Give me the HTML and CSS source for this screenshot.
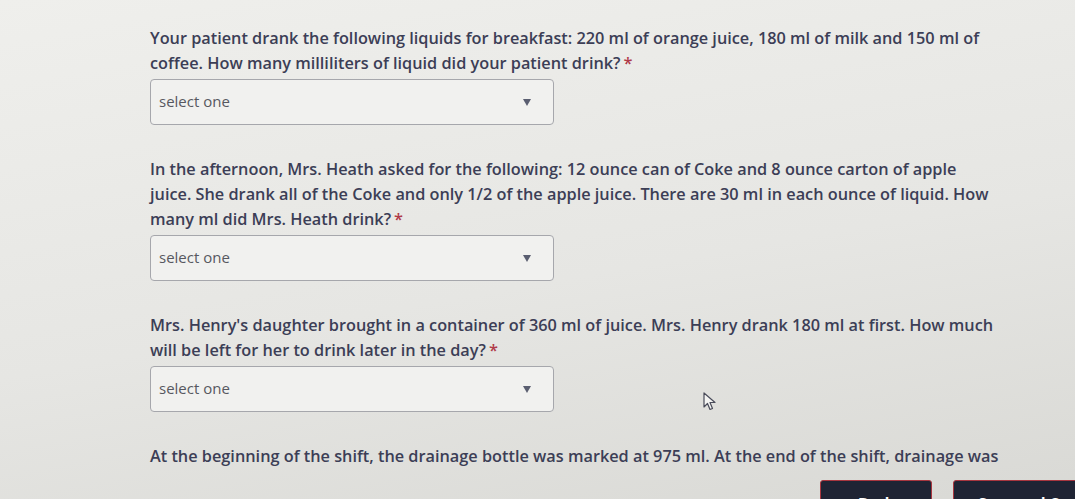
FILE: index.html
```html
<!DOCTYPE html>
<html>
<head>
    <title>Fluid Intake Quiz</title>
    <link rel="stylesheet" href="styles.css">
</head>
<body>
    <div class="page">
        <form class="quiz">
            <div class="question">
                <p class="prompt">Your patient drank the following liquids for breakfast: 220 ml of orange juice, 180 ml of milk and 150 ml of coffee. How many milliliters of liquid did your patient drink?<span class="req">*</span></p>
                <div class="select">
                    <span>select one</span>
                    <span class="arrow"></span>
                </div>
            </div>
            <div class="question">
                <p class="prompt">In the afternoon, Mrs. Heath asked for the following: 12 ounce can of Coke and 8 ounce carton of apple juice. She drank all of the Coke and only 1/2 of the apple juice. There are 30 ml in each ounce of liquid. How many ml did Mrs. Heath drink?<span class="req">*</span></p>
                <div class="select">
                    <span>select one</span>
                    <span class="arrow"></span>
                </div>
            </div>
            <div class="question">
                <p class="prompt">Mrs. Henry's daughter brought in a container of 360 ml of juice. Mrs. Henry drank 180 ml at first. How much will be left for her to drink later in the day?<span class="req">*</span></p>
                <div class="select">
                    <span>select one</span>
                    <span class="arrow"></span>
                </div>
            </div>
            <div class="question question-last">
                <p class="prompt">At the beginning of the shift, the drainage bottle was marked at 975 ml. At the end of the shift, drainage was</p>
            </div>
            <div class="form-actions">
                <button type="button" class="btn">Back</button>
                <button type="button" class="btn btn-wide">Save and Continue</button>
            </div>
        </form>
        <svg class="cursor" width="14" height="20" viewBox="0 0 14 20">
            <path d="M1 1 L1 15 L4.5 11.5 L7 17.5 L9.5 16.5 L7 10.5 L12 10.5 Z" fill="#f4f4f2" stroke="#4a4c5a" stroke-width="1.2" stroke-linejoin="round"/>
        </svg>
    </div>
</body>
</html>
```

FILE: styles.css
```css
body {
    margin: 0;
    font-family: "Open Sans", Arial, sans-serif;
    background: linear-gradient(170deg, #efefec 0%, #e6e6e3 55%, #d9d9d5 100%);
    color: #3c3e56;
    height: 499px;
    overflow: hidden;
}

.page {
    position: relative;
    padding: 26px 0 0 150px;
}

.quiz {
    width: 850px;
}

.question {
    margin-bottom: 32px;
}

.question-last {
    margin-bottom: 11px;
}

.prompt {
    margin: 0;
    font-size: 16.3px;
    font-weight: 600;
    line-height: 25px;
}

.req {
    color: #b03a48;
    margin-left: 3px;
}

.select {
    display: flex;
    justify-content: space-between;
    width: 404px;
    height: 46px;
    margin-top: 3px;
    padding: 11px 22px 0 8px;
    box-sizing: border-box;
    border: 1px solid #a6a7ac;
    border-radius: 4px;
    background-color: #f1f1ef;
    color: #57585f;
    font-size: 15px;
}

.arrow {
    width: 0;
    height: 0;
    margin-top: 8px;
    border-left: 4px solid transparent;
    border-right: 4px solid transparent;
    border-top: 7px solid #5a5e70;
}

.form-actions {
    display: flex;
    gap: 21px;
    margin-left: 670px;
}

.btn {
    flex: none;
    width: 112px;
    height: 40px;
    padding: 3px 0 0;
    border: 1px solid #a8363f;
    border-radius: 3px;
    background-color: #1f2434;
    color: #fff;
    font-family: "Open Sans", Arial, sans-serif;
    font-size: 15px;
    font-weight: 700;
    text-align: center;
    align-self: flex-start;
}

.btn-wide {
    width: 190px;
}

.cursor {
    position: absolute;
    left: 703px;
    top: 392px;
}
```
